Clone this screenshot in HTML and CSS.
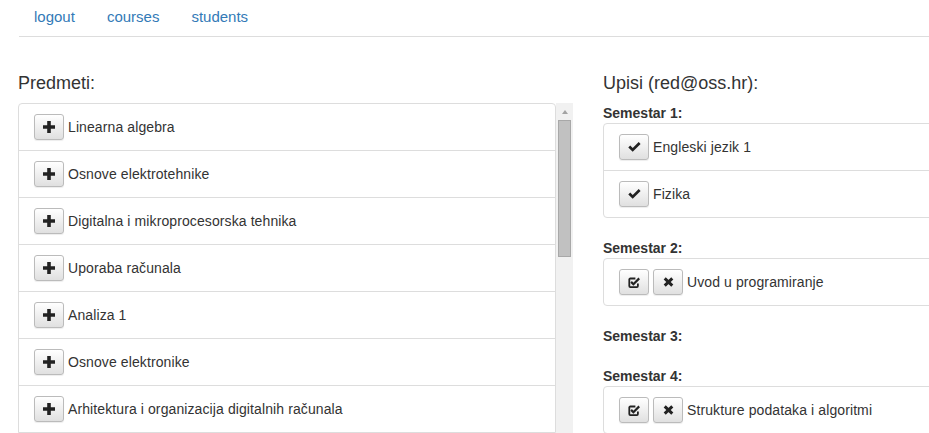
FILE: index.html
```html
<!DOCTYPE html>
<html lang="hr">
<head>
<meta charset="utf-8">
<title>Upisi</title>
<link rel="stylesheet" href="styles.css">
</head>
<body>
<div class="page">
  <ul class="nav">
    <li><a href="#">logout</a></li>
    <li><a href="#">courses</a></li>
    <li><a href="#">students</a></li>
  </ul>

  <div class="row">
    <section class="col">
      <h4 class="heading">Predmeti:</h4>
      <div class="scroller">
        <ul class="list-group list-left">
          <li class="item"><button class="btn" type="button"><svg class="ic-plus" viewBox="0 0 12 12"><path d="M4.2 0h3.6v4.2H12v3.6H7.8V12H4.2V7.8H0V4.2h4.2z"/></svg></button><span>Linearna algebra</span></li>
          <li class="item"><button class="btn" type="button"><svg class="ic-plus" viewBox="0 0 12 12"><path d="M4.2 0h3.6v4.2H12v3.6H7.8V12H4.2V7.8H0V4.2h4.2z"/></svg></button><span>Osnove elektrotehnike</span></li>
          <li class="item"><button class="btn" type="button"><svg class="ic-plus" viewBox="0 0 12 12"><path d="M4.2 0h3.6v4.2H12v3.6H7.8V12H4.2V7.8H0V4.2h4.2z"/></svg></button><span>Digitalna i mikroprocesorska tehnika</span></li>
          <li class="item"><button class="btn" type="button"><svg class="ic-plus" viewBox="0 0 12 12"><path d="M4.2 0h3.6v4.2H12v3.6H7.8V12H4.2V7.8H0V4.2h4.2z"/></svg></button><span>Uporaba računala</span></li>
          <li class="item"><button class="btn" type="button"><svg class="ic-plus" viewBox="0 0 12 12"><path d="M4.2 0h3.6v4.2H12v3.6H7.8V12H4.2V7.8H0V4.2h4.2z"/></svg></button><span>Analiza 1</span></li>
          <li class="item"><button class="btn" type="button"><svg class="ic-plus" viewBox="0 0 12 12"><path d="M4.2 0h3.6v4.2H12v3.6H7.8V12H4.2V7.8H0V4.2h4.2z"/></svg></button><span>Osnove elektronike</span></li>
          <li class="item"><button class="btn" type="button"><svg class="ic-plus" viewBox="0 0 12 12"><path d="M4.2 0h3.6v4.2H12v3.6H7.8V12H4.2V7.8H0V4.2h4.2z"/></svg></button><span>Arhitektura i organizacija digitalnih računala</span></li>
        </ul>
        <div class="rail" aria-hidden="true">
          <span class="rail-arrow"></span>
          <span class="rail-thumb"></span>
        </div>
      </div>
    </section>

    <section class="col">
      <h4 class="heading">Upisi (red@oss.hr):</h4>

      <div class="semester">
        <label class="sem-label">Semestar 1:</label>
        <ul class="list-group">
          <li class="item"><button class="btn" type="button"><svg class="ic-ok" viewBox="0 0 13 10"><path d="M0.3 5.4 2.2 3.5 4.7 6 10.7 0 12.6 1.9 4.7 9.8z"/></svg></button><span>Engleski jezik 1</span></li>
          <li class="item"><button class="btn" type="button"><svg class="ic-ok" viewBox="0 0 13 10"><path d="M0.3 5.4 2.2 3.5 4.7 6 10.7 0 12.6 1.9 4.7 9.8z"/></svg></button><span>Fizika</span></li>
        </ul>
      </div>

      <div class="semester">
        <label class="sem-label">Semestar 2:</label>
        <ul class="list-group">
          <li class="item">
            <button class="btn" type="button"><svg class="ic-check" viewBox="0 0 12 11"><path class="box" d="M7.4 1.5H2.3a1 1 0 0 0-1 1v6.6a1 1 0 0 0 1 1h6.6a1 1 0 0 0 1-1V6.6"/><path class="tick" d="M3.1 4.9 5.4 7.2 11.2 1.4"/></svg></button>
            <button class="btn" type="button"><svg class="ic-remove" viewBox="0 0 11 10"><path d="M1.7 1.4 9.3 8.6M9.3 1.4 1.7 8.6"/></svg></button>
            <span>Uvod u programiranje</span>
          </li>
        </ul>
      </div>

      <div class="semester">
        <label class="sem-label">Semestar 3:</label>
      </div>

      <div class="semester">
        <label class="sem-label">Semestar 4:</label>
        <ul class="list-group">
          <li class="item">
            <button class="btn" type="button"><svg class="ic-check" viewBox="0 0 12 11"><path class="box" d="M7.4 1.5H2.3a1 1 0 0 0-1 1v6.6a1 1 0 0 0 1 1h6.6a1 1 0 0 0 1-1V6.6"/><path class="tick" d="M3.1 4.9 5.4 7.2 11.2 1.4"/></svg></button>
            <button class="btn" type="button"><svg class="ic-remove" viewBox="0 0 11 10"><path d="M1.7 1.4 9.3 8.6M9.3 1.4 1.7 8.6"/></svg></button>
            <span>Strukture podataka i algoritmi</span>
          </li>
        </ul>
      </div>
    </section>
  </div>
</div>
</body>
</html>
```

FILE: styles.css
```css
* {
  box-sizing: border-box;
}

html,
body {
  margin: 0;
  overflow: hidden;
}

body {
  font-family: "Liberation Sans", Arial, Helvetica, sans-serif;
  font-size: 14px;
  line-height: 20px;
  color: #333;
  background: #fff;
}

.page {
  width: 1200px;
  padding-left: 18px;
}

/* top navigation */
.nav {
  list-style: none;
  margin: 0 0 0 1px;
  padding: 0;
  display: flex;
  gap: 2px;
  border-bottom: 1px solid #ddd;
}

.nav a {
  display: block;
  padding: 7px 15px 9px;
  font-size: 15px;
  color: #337ab7;
  text-decoration: none;
}

/* columns */
.row {
  display: flex;
  gap: 30px;
}

.col {
  width: 555px;
  flex: none;
}

.heading {
  margin: 36px 0 10px;
  font-size: 18px;
  font-weight: 500;
  line-height: 20px;
  color: #333;
}

/* list groups */
.list-group {
  list-style: none;
  margin: 0;
  padding: 0;
  border: 1px solid #ddd;
  border-radius: 4px;
  background: #fff;
}

.item {
  display: flex;
  align-items: center;
  gap: 4px;
  padding: 10px 15px;
  letter-spacing: 0.1px;
}

.item + .item {
  border-top: 1px solid #ddd;
}

/* left scrolling panel */
.scroller {
  display: flex;
  height: 340px;
}

.list-left {
  flex: 1;
  align-self: flex-start;
  border-radius: 4px 4px 0 0;
}

.rail {
  width: 17px;
  flex: none;
  background: #f1f1f1;
  display: flex;
  flex-direction: column;
  align-items: center;
}

.rail-arrow {
  height: 17px;
  width: 17px;
  display: flex;
  align-items: center;
  justify-content: center;
}

.rail-arrow::before {
  content: "";
  width: 0;
  height: 0;
  border-left: 3.5px solid transparent;
  border-right: 3.5px solid transparent;
  border-bottom: 4px solid #a3a3a3;
  margin-top: 1px;
}

.rail-thumb {
  width: 13px;
  height: 137px;
  background: #c1c1c1;
  border: 1px solid #a8a8a8;
}

/* right column semesters */
.semester {
  margin-bottom: 20px;
}

.sem-label {
  display: block;
  font-weight: 700;
  line-height: 20px;
}

/* buttons */
.btn {
  display: inline-flex;
  align-items: center;
  justify-content: center;
  flex: none;
  width: 30px;
  height: 26px;
  padding: 0;
  margin: 0;
  border: 1px solid #bbb;
  border-radius: 3px;
  background: linear-gradient(to bottom, #fff 0%, #e0e0e0 100%);
  box-shadow: inset 0 1px 0 rgba(255, 255, 255, 0.15), 0 1px 1px rgba(0, 0, 0, 0.075);
  color: #222;
  cursor: pointer;
}

.btn svg {
  display: block;
  fill: currentColor;
}

.ic-plus {
  width: 12px;
  height: 12px;
}

.ic-ok {
  width: 13px;
  height: 10px;
}

.ic-check {
  width: 12px;
  height: 11px;
}

.ic-check path {
  fill: none;
  stroke: currentColor;
}

.ic-check .box {
  stroke-width: 1.8;
}

.ic-check .tick {
  stroke-width: 2.2;
}

.ic-remove {
  width: 11px;
  height: 10px;
}

.ic-remove path {
  fill: none;
  stroke: currentColor;
  stroke-width: 3;
}
```
